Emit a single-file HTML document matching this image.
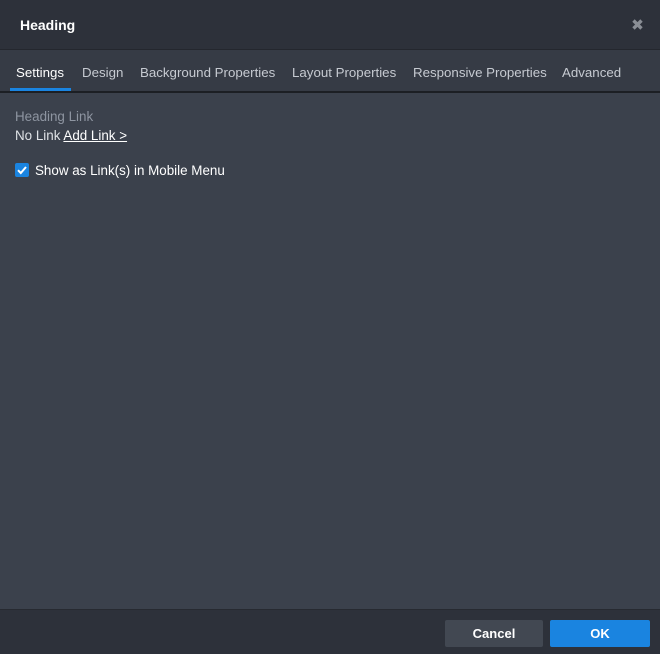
<!DOCTYPE html>
<html><head><style>
*{margin:0;padding:0;box-sizing:border-box}
body{width:660px;height:654px;background:#3b414c;font-family:"Liberation Sans",Arial,sans-serif;position:relative;overflow:hidden}
.hdr{position:absolute;left:0;top:0;width:660px;height:50px;background:#2d313a;border-bottom:1px solid #24272e}
.hdr h1{position:absolute;left:20px;top:17px;font-size:14px;font-weight:bold;color:#fff}
.x{position:absolute;left:632px;top:19px;width:11px;height:11px}
.tabs{position:absolute;left:0;top:50px;width:660px;height:43px;background:#363b45;border-bottom:2px solid #1c1f24}
.tab{position:absolute;top:15px;font-size:13.3px;color:#c6cad1}
.tab.a{color:#fff}
.ul{position:absolute;left:10px;top:38px;width:61px;height:3px;background:#1a84e0}
.c{position:absolute;left:15px;font-size:13.4px}
.foot{position:absolute;left:0;top:609px;width:660px;height:45px;background:#2d313a;border-top:1px solid #272a31}
.btn{position:absolute;top:10px;height:27px;border-radius:2px;color:#fff;font-weight:bold;font-size:13px;text-align:center;line-height:27px}
</style></head><body>
<div class="hdr"><h1>Heading</h1>
<svg class="x" viewBox="0 0 11 11"><path d="M1.5 1.5L9.5 9.5M9.5 1.5L1.5 9.5" stroke="#8a8e95" stroke-width="3.4"/></svg></div>
<div class="tabs">
<span class="tab a" style="left:16px">Settings</span>
<span class="tab" style="left:82px">Design</span>
<span class="tab" style="left:140px">Background Properties</span>
<span class="tab" style="left:292px">Layout Properties</span>
<span class="tab" style="left:413px">Responsive Properties</span>
<span class="tab" style="left:562px">Advanced</span>
<div class="ul"></div>
</div>
<div class="c" style="top:109px;color:#8e95a1">Heading Link</div>
<div class="c" style="top:128px;color:#dfe2e6">No Link <span style="color:#fff;text-decoration:underline">Add Link &gt;</span></div>
<div style="position:absolute;left:15px;top:163px;width:14px;height:14px;background:#1a84e0;border-radius:2px">
<svg width="14" height="14" viewBox="0 0 14 14"><path d="M3 7.2L5.8 10L11 4" stroke="#fff" stroke-width="2" fill="none"/></svg></div>
<div class="c" style="left:35px;top:163px;color:#fff">Show as Link(s) in Mobile Menu</div>
<div class="foot">
<div class="btn" style="left:445px;width:98px;background:#424852">Cancel</div>
<div class="btn" style="left:550px;width:100px;background:#1a84e0">OK</div>
</div>
</body></html>
